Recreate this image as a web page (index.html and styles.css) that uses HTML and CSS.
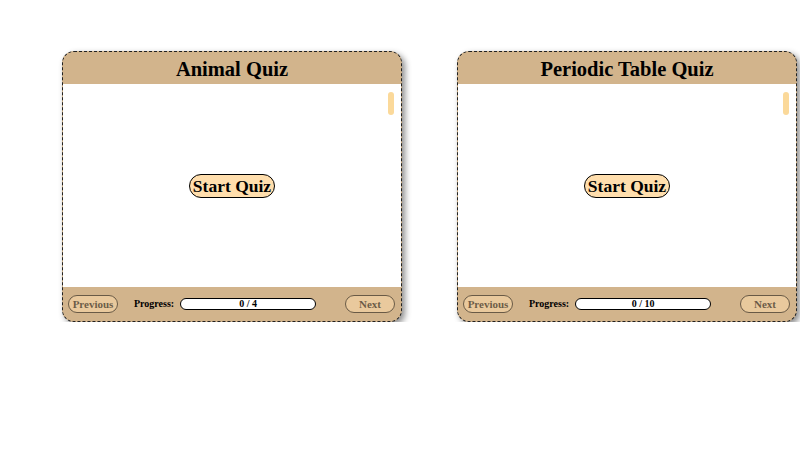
FILE: index.html
```html
<!DOCTYPE html>
<html>
<head>
    <title>Quizzes</title>
    <link rel="stylesheet" href="styles.css">
</head>
<body>
    <div class="quiz-list">
        <div class="quiz-card">
            <div class="quiz-header">Animal Quiz</div>
            <div class="quiz-body">
                <button class="start-btn">Start Quiz</button>
                <div class="scroll-thumb"></div>
            </div>
            <div class="quiz-footer">
                <button class="nav-btn" disabled>Previous</button>
                <div class="progress">
                    <span class="progress-label">Progress:</span>
                    <div class="progress-bar">0 / 4</div>
                </div>
                <button class="nav-btn" disabled>Next</button>
            </div>
        </div>

        <div class="quiz-card">
            <div class="quiz-header">Periodic Table Quiz</div>
            <div class="quiz-body">
                <button class="start-btn">Start Quiz</button>
                <div class="scroll-thumb"></div>
            </div>
            <div class="quiz-footer">
                <button class="nav-btn" disabled>Previous</button>
                <div class="progress">
                    <span class="progress-label">Progress:</span>
                    <div class="progress-bar">0 / 10</div>
                </div>
                <button class="nav-btn" disabled>Next</button>
            </div>
        </div>
    </div>
</body>
</html>
```

FILE: styles.css
```css
body {
    margin: 0;
    padding: 0;
    background-color: #ffffff;
    font-family: "Liberation Serif", "Times New Roman", serif;
    color: #000;
    overflow: hidden;
}

.quiz-list {
    display: flex;
    gap: 55px;
    padding: 51px 0 0 62px;
}

.quiz-card {
    flex: 0 0 auto;
    width: 338px;
    height: 269px;
    display: flex;
    flex-direction: column;
    border: 1px dashed #222;
    border-radius: 12px;
    background-color: #D2B48C;
    box-shadow: 3px 3px 6px rgba(0, 0, 0, 0.45);
    overflow: hidden;
}

.quiz-header {
    height: 32px;
    line-height: 34px;
    text-align: center;
    font-size: 20.5px;
    font-weight: bold;
}

.quiz-body {
    position: relative;
    height: 203px;
    background-color: #ffffff;
    display: flex;
    align-items: center;
    justify-content: center;
}

/* scrollbar thumb of the question area */
.scroll-thumb {
    position: absolute;
    top: 8px;
    right: 7px;
    width: 6px;
    height: 23px;
    border-radius: 3px;
    background-color: #FBD99A;
}

.start-btn {
    font-family: inherit;
    font-size: 17.5px;
    font-weight: bold;
    background-color: #FFDEAD;
    border: 1px solid #000;
    border-radius: 12px;
    padding: 1px 3px;
    line-height: 20px;
    color: #000;
    cursor: pointer;
}

.quiz-footer {
    flex: 1;
    display: flex;
    align-items: center;
    padding: 0 6px 1px 5px;
}

.nav-btn {
    width: 50px;
    font-family: inherit;
    font-size: 11px;
    font-weight: bold;
    background-color: #FFDEAD;
    border: 1px solid #000;
    border-radius: 9px;
    padding: 2px 0;
    line-height: 12px;
    color: #000;
    cursor: pointer;
}

.nav-btn:disabled {
    opacity: 0.5;
    cursor: default;
}

.progress {
    flex: 1;
    display: flex;
    align-items: center;
    gap: 6px;
    margin-left: 16px;
}

.progress-label {
    font-size: 10px;
    font-weight: bold;
}

.progress-bar {
    width: 134px;
    height: 10px;
    line-height: 10px;
    background-color: #fff;
    border: 1px solid #000;
    border-radius: 6px;
    text-align: center;
    font-size: 10px;
    font-weight: bold;
}
```
